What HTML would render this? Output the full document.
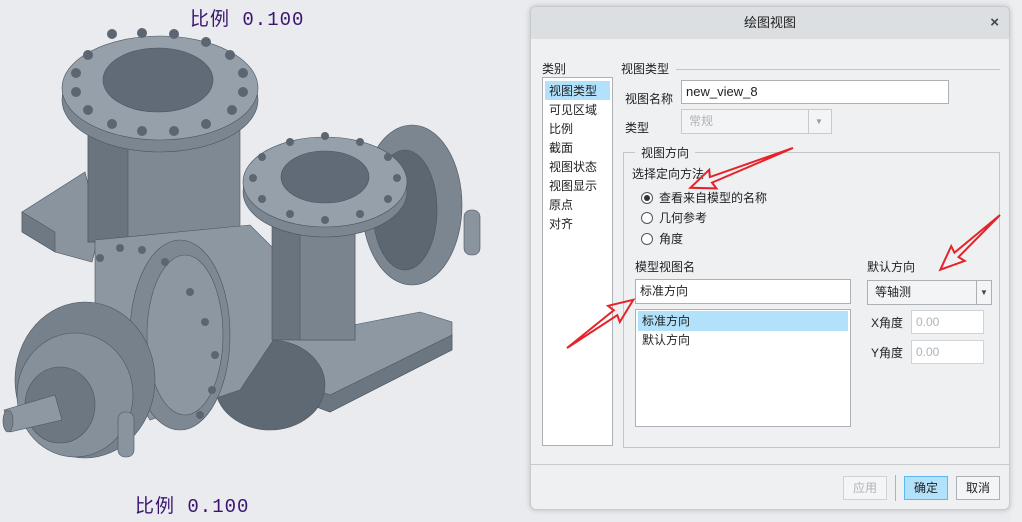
<!DOCTYPE html>
<html><head><meta charset="utf-8"><style>
*{margin:0;padding:0;box-sizing:border-box}
body{width:1022px;height:522px;overflow:hidden;background:#e9ebee;font-family:"Liberation Sans","Noto Sans CJK SC",sans-serif;font-size:12px;color:#222;position:relative}
.a{position:absolute}
.scale{font-family:"Liberation Mono","Noto Sans CJK SC",monospace;color:#3a1570;font-size:19px;letter-spacing:1px}
.dlg{left:530px;top:6px;width:480px;height:504px;background:#eef0f2;border:1px solid #c8cacc;border-radius:6px;box-shadow:0 0 6px rgba(0,0,0,.2);overflow:hidden}
.tb{left:0;top:0;width:100%;height:32px;background:#dcdfe1;text-align:center;line-height:32px;font-size:13px}
.box{background:#fff;border:1px solid #adb1b5}
.t{font-size:12px;line-height:16px;white-space:nowrap}
.btn{border:1px solid #adb1b5;background:#f4f5f6;text-align:center;line-height:22px;font-size:12px}
.rad{width:12px;height:12px;border:1px solid #555;border-radius:50%;background:#fff}
</style></head><body>
<svg class="a" style="left:0;top:0" width="530" height="522">
<g stroke="#4b5560" stroke-width="0.6">
<polygon points="22,212 85,172 100,232 92,262 55,252 22,232" fill="#8a949f"/>
<polygon points="22,212 55,232 55,252 22,232" fill="#6f7984"/>
<polygon points="250,345 420,312 452,322 452,350 330,412 250,382" fill="#8e98a3"/>
<polygon points="250,365 330,395 452,335 452,350 330,412 250,382" fill="#6c7681"/>
<ellipse cx="270" cy="385" rx="55" ry="45" fill="#5f6974"/>
<ellipse cx="412" cy="205" rx="50" ry="80" fill="#7c8691"/>
<ellipse cx="405" cy="210" rx="32" ry="60" fill="#5d6772"/>
<rect x="88" y="112" width="152" height="130" fill="#7f8994"/>
<rect x="88" y="112" width="40" height="130" fill="#6a747f"/>
<polygon points="95,240 250,225 275,250 280,330 240,390 150,420 95,330" fill="#8d97a2"/>
<ellipse cx="160" cy="100" rx="98" ry="52" fill="#7c8691"/>
<ellipse cx="160" cy="88" rx="98" ry="52" fill="#96a0aa"/>
<ellipse cx="158" cy="80" rx="55" ry="32" fill="#616b77"/>
<rect x="272" y="215" width="83" height="125" fill="#6a747f"/>
<rect x="300" y="215" width="55" height="125" fill="#7a848f"/>
<ellipse cx="325" cy="192" rx="82" ry="45" fill="#7c8691"/>
<ellipse cx="325" cy="182" rx="82" ry="45" fill="#96a0aa"/>
<ellipse cx="325" cy="177" rx="44" ry="26" fill="#616b77"/>
<ellipse cx="180" cy="335" rx="50" ry="95" fill="#7e8893"/>
<ellipse cx="185" cy="335" rx="38" ry="80" fill="#8d97a2"/>
<ellipse cx="85" cy="380" rx="70" ry="78" fill="#77818c"/>
<ellipse cx="75" cy="395" rx="58" ry="62" fill="#85909b"/>
<ellipse cx="60" cy="405" rx="35" ry="38" fill="#6d7782"/>
<polygon points="4,410 55,395 62,420 10,432" fill="#8e98a3"/>
<ellipse cx="8" cy="421" rx="5" ry="11" fill="#7a848f"/>
<rect x="118" y="412" width="16" height="45" rx="7" fill="#8a949f"/>
<rect x="464" y="210" width="16" height="45" rx="7" fill="#8a949f"/>
</g>
<g fill="#5c6672">
<circle cx="112" cy="34" r="5"/><circle cx="142" cy="33" r="5"/><circle cx="174" cy="34" r="5"/><circle cx="206" cy="42" r="5"/><circle cx="230" cy="55" r="5"/><circle cx="243" cy="73" r="5"/><circle cx="243" cy="92" r="5"/><circle cx="232" cy="110" r="5"/><circle cx="206" cy="124" r="5"/><circle cx="174" cy="131" r="5"/><circle cx="142" cy="131" r="5"/><circle cx="112" cy="124" r="5"/><circle cx="88" cy="110" r="5"/><circle cx="76" cy="92" r="5"/><circle cx="76" cy="73" r="5"/><circle cx="88" cy="55" r="5"/>
<circle cx="325" cy="136" r="4"/><circle cx="360" cy="142" r="4"/><circle cx="388" cy="157" r="4"/><circle cx="397" cy="178" r="4"/><circle cx="388" cy="199" r="4"/><circle cx="360" cy="214" r="4"/><circle cx="325" cy="220" r="4"/><circle cx="290" cy="214" r="4"/><circle cx="262" cy="199" r="4"/><circle cx="253" cy="178" r="4"/><circle cx="262" cy="157" r="4"/><circle cx="290" cy="142" r="4"/>
<circle cx="100" cy="258" r="4"/><circle cx="120" cy="248" r="4"/><circle cx="142" cy="250" r="4"/><circle cx="165" cy="262" r="4"/><circle cx="190" cy="292" r="4"/><circle cx="205" cy="322" r="4"/><circle cx="215" cy="355" r="4"/><circle cx="212" cy="390" r="4"/><circle cx="200" cy="415" r="4"/>
</g>
</svg>
<div class="a scale" style="left:190px;top:4px">比例 0.100</div>
<div class="a scale" style="left:135px;top:491px">比例 0.100</div>
<div class="a" style="left:1010px;top:0;width:12px;height:522px;background:#eceef0"></div>

<div class="a dlg">
 <div class="a tb">绘图视图<span class="a" style="right:10px;top:0;font-size:15px;font-weight:bold;color:#444">×</span></div>
 <div class="a t" style="left:11px;top:54px">类别</div>
 <div class="a box" style="left:11px;top:70px;width:71px;height:369px">
  <div class="a" style="left:2px;top:3px;width:65px;height:19px;background:#b1e1fb"></div>
  <div class="a t" style="left:6px;top:4px;line-height:19px">视图类型<br>可见区域<br>比例<br>截面<br>视图状态<br>视图显示<br>原点<br>对齐</div>
 </div>
 <div class="a t" style="left:90px;top:54px">视图类型</div>
 <div class="a" style="left:145px;top:62px;width:324px;height:1px;background:#c3c6c9"></div>
 <div class="a t" style="left:94px;top:84px">视图名称</div>
 <div class="a box" style="left:150px;top:73px;width:268px;height:24px;padding-left:4px;line-height:22px;font-size:13px">new_view_8</div>
 <div class="a t" style="left:94px;top:113px">类型</div>
 <div class="a" style="left:150px;top:102px;width:151px;height:25px;border:1px solid #c8cbce;background:#f3f4f5;color:#b0b3b6;line-height:23px;padding-left:7px">常规<span class="a" style="left:126px;top:0;width:1px;height:23px;background:#c8cbce"></span><span class="a" style="left:133px;top:0;font-size:8px;color:#999">▼</span></div>
 <div class="a" style="left:92px;top:145px;width:377px;height:296px;border:1px solid #c3c6c9"></div>
 <div class="a t" style="left:104px;top:138px;background:#eef0f2;padding:0 6px">视图方向</div>
 <div class="a t" style="left:101px;top:159px">选择定向方法</div>
 <div class="a rad" style="left:110px;top:185px"><div class="a" style="left:2px;top:2px;width:6px;height:6px;border-radius:50%;background:#333"></div></div>
 <div class="a t" style="left:128px;top:183px">查看来自模型的名称</div>
 <div class="a rad" style="left:110px;top:205px"></div>
 <div class="a t" style="left:128px;top:203px">几何参考</div>
 <div class="a rad" style="left:110px;top:226px"></div>
 <div class="a t" style="left:128px;top:224px">角度</div>
 <div class="a t" style="left:104px;top:252px">模型视图名</div>
 <div class="a box" style="left:104px;top:272px;width:216px;height:25px;padding-left:4px;line-height:23px">标准方向</div>
 <div class="a box" style="left:104px;top:302px;width:216px;height:118px">
  <div class="a" style="left:2px;top:1px;width:210px;height:20px;background:#b1e1fb"></div>
  <div class="a t" style="left:6px;top:2px;line-height:19px">标准方向<br>默认方向</div>
 </div>
 <div class="a t" style="left:336px;top:252px">默认方向</div>
 <div class="a" style="left:336px;top:273px;width:125px;height:25px;border:1px solid #adb1b5;background:#f3f4f5;line-height:23px;padding-left:7px">等轴测<span class="a" style="left:108px;top:0;width:1px;height:23px;background:#adb1b5"></span><span class="a" style="left:112px;top:0;font-size:8px;color:#444">▼</span></div>
 <div class="a t" style="left:340px;top:308px">X角度</div>
 <div class="a" style="left:380px;top:303px;width:73px;height:24px;border:1px solid #d0d3d6;background:#fff;color:#b0b3b6;line-height:22px;padding-left:4px">0.00</div>
 <div class="a t" style="left:340px;top:338px">Y角度</div>
 <div class="a" style="left:380px;top:333px;width:73px;height:24px;border:1px solid #d0d3d6;background:#fff;color:#b0b3b6;line-height:22px;padding-left:4px">0.00</div>
 <div class="a" style="left:0;top:457px;width:100%;height:1px;background:#c8cbce"></div>
 <div class="a btn" style="left:312px;top:469px;width:44px;height:24px;color:#b0b3b6;border-color:#d0d3d6">应用</div>
 <div class="a" style="left:364px;top:468px;width:1px;height:26px;background:#b0b3b6"></div>
 <div class="a btn" style="left:373px;top:469px;width:44px;height:24px;background:#b1e1fb;border-color:#5bb8f0">确定</div>
 <div class="a btn" style="left:425px;top:469px;width:44px;height:24px">取消</div>
</div>

<svg class="a" style="left:0;top:0" width="1022" height="522" fill="none" stroke="#e5232a" stroke-width="2" stroke-linejoin="miter">
<path transform="translate(793,148) rotate(158.8)" d="M0,0 L88,-3 L86,-10 L110,0 L86,10 L88,3 Z"/>
<path transform="translate(1000,215) rotate(137.5)" d="M0,0 L59,-3 L57,-10 L81,0 L57,10 L59,3 Z"/>
<path transform="translate(567,348) rotate(-36)" d="M0,0 L60,-3 L58,-10 L82,0 L58,10 L60,3 Z"/>
</svg>
</body></html>
